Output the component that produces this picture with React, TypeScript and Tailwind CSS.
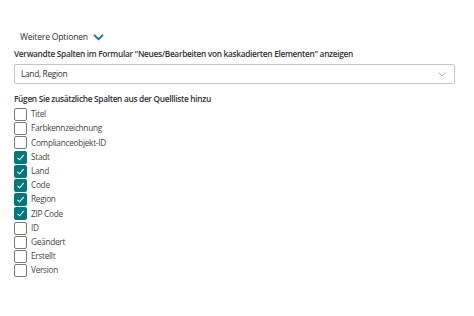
import React from "react";

const items: [string, boolean][] = [
  ["Titel", false],
  ["Farbkennzeichnung", false],
  ["Complianceobjekt-ID", false],
  ["Stadt", true],
  ["Land", true],
  ["Code", true],
  ["Region", true],
  ["ZIP Code", true],
  ["ID", false],
  ["Geändert", false],
  ["Erstellt", false],
  ["Version", false],
];

function Box({ checked }: { checked: boolean }) {
  if (checked) {
    return (
      <div className="w-[13px] h-[13px] rounded-[2px] bg-[#03787c] flex items-center justify-center">
        <svg width="9" height="9" viewBox="0 0 9 9">
          <path d="M1.5 4.8 L3.6 6.8 L7.6 2.2" fill="none" stroke="white" strokeWidth="1.1" />
        </svg>
      </div>
    );
  }
  return <div className="w-[13px] h-[13px] rounded-[2px] border border-[#7a7876] bg-white" />;
}

export default function App() {
  return (
    <div
      className="w-[474px] h-[316px] bg-white text-[#323130] pl-[14px] pr-[19px] text-[8.3px] tracking-[-0.3px]"
      style={{ fontFamily: '"Open Sans", "Noto Sans", sans-serif' }}
    >
      <div className="pt-[31px] pl-[6px] flex items-center gap-[5px] h-[43px] text-[8.6px] tracking-[-0.2px] text-[#323130]">
        <span>Weitere Optionen</span>
        <svg width="11" height="8" viewBox="0 0 11 8">
          <path d="M1 1.8 L5.5 6.2 L10 1.8" fill="none" stroke="#0f6cbd" strokeWidth="1.8" />
        </svg>
      </div>
      <div className="mt-[5px] font-semibold leading-[12px]">
        Verwandte Spalten im Formular "Neues/Bearbeiten von kaskadierten Elementen" anzeigen
      </div>
      <div className="mt-[4px] h-[20px] border border-[#c8c6c4] rounded-[2px] flex items-center justify-between pl-[6px] pr-[8px]">
        <span>Land, Region</span>
        <svg width="8" height="5" viewBox="0 0 8 5">
          <path d="M0.5 0.5 L4 4 L7.5 0.5" fill="none" stroke="#a19f9d" strokeWidth="0.8" />
        </svg>
      </div>
      <div className="mt-[9px] font-semibold leading-[12px]">
        Fügen Sie zusätzliche Spalten aus der Quellliste hinzu
      </div>
      <div className="mt-[3px] flex flex-col gap-[1.2px]">
        {items.map(([label, checked]) => (
          <div key={label} className="flex items-center gap-[4px] h-[13px]">
            <Box checked={checked} />
            <span className="text-[#484644]">{label}</span>
          </div>
        ))}
      </div>
    </div>
  );
}
